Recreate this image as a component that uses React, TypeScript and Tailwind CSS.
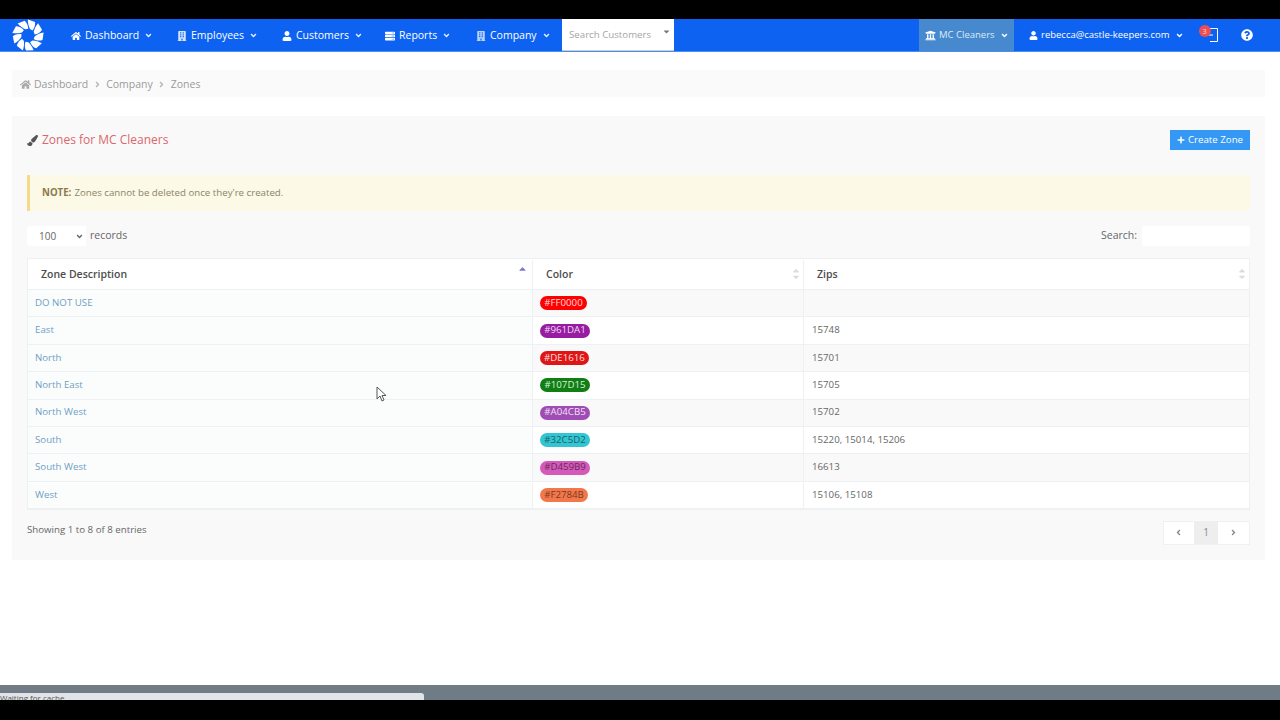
import React from "react";
import { FaHome, FaBuilding, FaUser, FaServer, FaUniversity, FaQuestionCircle, FaPaintBrush, FaPlus, FaAngleDown, FaAngleRight, FaAngleLeft, FaCaretDown, FaSortUp, FaSortDown } from "react-icons/fa";

const navLeft = [
  { icon: FaHome, label: "Dashboard", cls: "w-[106px] pl-[12px]", iconCls: "mr-[4px] shrink-0" },
  { icon: FaBuilding, label: "Employees", cls: "w-[105px] pl-[12px]", iconCls: "mr-[4px] shrink-0 text-[#d5e4fb]" },
  { icon: FaUser, label: "Customers", cls: "w-[103px] pl-[12px]", iconCls: "mr-[4px] shrink-0" },
  { icon: FaServer, label: "Reports", cls: "w-[91px] pl-[12px]", iconCls: "mr-[4px] shrink-0" },
  { icon: FaBuilding, label: "Company", cls: "w-[98px] pl-[12px]", iconCls: "mr-[4px] shrink-0 text-[#b9d3fa]" },
];

const rows = [
  { zone: "DO NOT USE", color: "#FF0000", text: "#ffd8d8", w: "w-[47px]", zips: "" },
  { zone: "East", color: "#961DA1", text: "#f0d8f2", w: "w-[50px]", zips: "15748" },
  { zone: "North", color: "#DE1616", text: "#ffdede", w: "w-[49px]", zips: "15701" },
  { zone: "North East", color: "#107D15", text: "#d8f0d8", w: "w-[50px]", zips: "15705" },
  { zone: "North West", color: "#A04CB5", text: "#f0e0f4", w: "w-[50px]", zips: "15702" },
  { zone: "South", color: "#32C5D2", text: "#1d5f67", w: "w-[50px]", zips: "15220, 15014, 15206" },
  { zone: "South West", color: "#D459B9", text: "#6a2a5f", w: "w-[50px]", zips: "16613" },
  { zone: "West", color: "#F2784B", text: "#7b3a20", w: "w-[48px]", zips: "15106, 15108" },
];

function Logo() {
  const blades = [0, 40, 80, 120, 160, 200, 240, 280, 320];
  return (
    <svg width="34" height="33" viewBox="0 0 34 33" className="shrink-0">
      {blades.map((a) => (
        <path key={a} d="M19 10 C17.500 7 16.800 4 16.800 0.600 L24 3 C24.500 6 23.500 9 21.500 11.500 Z" fill="#ffffff" transform={`rotate(${a} 17 16.5)`} />
      ))}
    </svg>
  );
}

function Sort({ active }: { active?: boolean }) {
  if (active) {
    return (
      <span className="flex flex-col items-center text-[#7b78c9]">
        <FaSortUp size={11} className="mt-[-6px]" />
      </span>
    );
  }
  return (
    <span className="relative h-[14px] w-[8px] text-[#d8dcdf]">
      <FaSortUp size={10} className="absolute left-[-1px] top-0" />
      <FaSortDown size={10} className="absolute left-[-1px] top-[2px]" />
    </span>
  );
}

export default function App() {
  return (
    <div className="relative flex h-[720px] w-[1280px] flex-col overflow-hidden bg-white text-[10.5px] text-[#666666] font-['Open_Sans',sans-serif]">
      <div className="h-[19px] shrink-0 bg-black" />
      <header className="flex h-[33px] shrink-0 items-stretch border-b border-[#4a8ff0] bg-[#0d62f2] text-white">
        <div className="flex w-[59px] items-center pl-[11px]">
          <Logo />
        </div>
        {navLeft.map((n) => {
          const I = n.icon;
          return (
            <div key={n.label} className={`flex items-center pt-[1px] text-[10.5px] ${n.cls}`}>
              <I size={10} className={n.iconCls} />
              <span className="whitespace-nowrap">{n.label}</span>
              <FaAngleDown size={9} className="ml-[5px] shrink-0 opacity-90" />
            </div>
          );
        })}
        <div className="flex w-[112px] items-start border-b border-[#cccccc] bg-white pl-[7px] text-[9.7px] text-[#a5a5a5]">
          <span className="mt-[9px] whitespace-nowrap">Search Customers</span>
          <FaCaretDown size={9} className="ml-[11px] mt-[8px] text-[#777777]" />
        </div>
        <div className="ml-[245px] flex w-[95px] items-center bg-[#4689ce] pl-[6px] text-[9.5px] text-[#dfeaf6]">
          <FaUniversity size={11} className="mr-[3px] shrink-0 text-white" />
          <span className="whitespace-nowrap">MC Cleaners</span>
          <FaAngleDown size={9} className="ml-[5px] shrink-0 text-white" />
        </div>
        <div className="ml-[15px] flex items-center text-[9.5px]">
          <FaUser size={9} className="mr-[3px] shrink-0" />
          <span className="whitespace-nowrap">rebecca@castle-keepers.com</span>
          <FaAngleDown size={9} className="ml-[5px] shrink-0" />
        </div>
        <div className="relative ml-[24px] flex w-[12px] items-center">
          <svg width="10" height="14" viewBox="0 0 10 14" fill="none" stroke="#fff" strokeWidth="1">
            <path d="M2 .5H9.500V13.500H2M.5 7H5" />
          </svg>
          <span className="absolute left-[-9px] top-[6px] flex h-[12px] w-[12px] items-center justify-center rounded-full bg-[#ef4d56] text-[8px] text-[#ffd5d5]">3</span>
        </div>
        <div className="ml-[21px] flex items-center">
          <FaQuestionCircle size={12} />
        </div>
      </header>

      <main className="flex-1 px-[12px] pr-[15px]">
        <nav className="mt-[18px] flex h-[27px] items-center bg-[#fafafa] pl-[8px] pt-[2px] text-[10.5px] text-[#9b9b9b]">
          <FaHome size={11} className="mr-[3px] text-[#aaaaaa]" />
          <span>Dashboard</span>
          <FaAngleRight size={9} className="mx-[4.500px] text-[#b5b5b5]" />
          <span>Company</span>
          <FaAngleRight size={9} className="mx-[4.500px] text-[#b5b5b5]" />
          <span>Zones</span>
        </nav>

        <section className="mt-[19px] h-[444px] bg-[#f9f9fa] px-[15px]">
          <div className="flex h-[48px] items-center justify-between">
            <div className="flex items-center text-[12px] text-[#d9686a]">
              <FaPaintBrush size={11} className="mr-[4px] text-[#555555]" />
              <span>Zones for MC Cleaners</span>
            </div>
            <button className="flex h-[20px] w-[80px] items-center justify-center bg-[#3598f5] text-[9.7px] text-white">
              <FaPlus size={8} className="mr-[3px]" />
              Create Zone
            </button>
          </div>

          <div className="mt-[11px] flex h-[36px] items-center border-l-[3px] border-[#f8d98c] bg-[#fcf9e6] pl-[12px] pt-[1px] text-[9.7px] text-[#8a8568]">
            <strong className="mr-[3px] font-bold text-[#8a7a4a]">NOTE:</strong>
            <span>Zones cannot be deleted once they're created.</span>
          </div>

          <div className="mt-[15px] flex h-[20px] items-center justify-between">
            <div className="flex items-center">
              <div className="flex h-[20px] w-[59px] items-center justify-between rounded-[2px] bg-white pl-[12px] pr-[2px] text-[10px]">
                <span>100</span>
                <FaAngleDown size={9} />
              </div>
              <span className="ml-[4px]">records</span>
            </div>
            <div className="flex items-center">
              <span className="mr-[5px]">Search:</span>
              <div className="h-[20px] w-[108px] rounded-[2px] bg-white" />
            </div>
          </div>

          <div className="mt-[12px] border-x border-t border-b-2 border-[#eef1f3] text-[9.7px]">
            <div className="grid h-[31px] grid-cols-[505px_271px_1fr] border-b border-[#eef1f3] bg-white pt-[1px] text-[10.5px] font-semibold text-[#4d4d4d]">
              <div className="flex items-center justify-between border-r border-[#eef1f3] pl-[13px] pr-[4px]">
                <span>Zone Description</span>
                <Sort active />
              </div>
              <div className="flex items-center justify-between border-r border-[#eef1f3] pl-[13px] pr-[3px]">
                <span>Color</span>
                <Sort />
              </div>
              <div className="flex items-center justify-between pl-[13px] pr-[3px]">
                <span>Zips</span>
                <Sort />
              </div>
            </div>
            {rows.map((r, i) => (
              <div
                key={r.zone}
                className={`grid h-[27.4px] grid-cols-[505px_271px_1fr] border-b border-[#eef1f3] last:h-[26px] last:border-b-0 last:pt-[1px] ${i % 2 === 0 ? "bg-[#f9f9f9]" : "bg-white"}`}
              >
                <div className="flex items-center border-r border-[#eef1f3] bg-[#fbfdfd] pl-[7px] text-[#6f9ec4]">{r.zone}</div>
                <div className="flex items-center border-r border-[#eef1f3] pl-[7px]">
                  <span
                    className={`flex h-[14px] items-center justify-center rounded-full text-[9.7px] ${r.w}`}
                    style={{ backgroundColor: r.color, color: r.text }}
                  >
                    {r.color}
                  </span>
                </div>
                <div className="flex items-center pl-[8px]">{r.zips}</div>
              </div>
            ))}
          </div>

          <div className="mt-[9px] flex items-start justify-between">
            <span className="mt-[4px] text-[9.7px] text-[#666666]">Showing 1 to 8 of 8 entries</span>
            <div className="mt-[2px] flex h-[24px] w-[87px] items-stretch border border-[#f0f0f0] text-[10px] text-[#888888]">
              <span className="flex w-[30px] items-center justify-center bg-white"><FaAngleLeft size={9} /></span>
              <span className="flex w-[25px] items-center justify-center bg-[#eeeeee]">1</span>
              <span className="flex w-[31px] items-center justify-center bg-white"><FaAngleRight size={9} /></span>
            </div>
          </div>
        </section>
      </main>

      <footer className="relative h-[15px] shrink-0 bg-[#6f7c86]">
        <div className="absolute bottom-0 left-0 h-[7px] w-[424px] overflow-hidden rounded-tr-[3px] bg-[#e0e4e8] text-[8px] leading-[10px] text-[#555555]">Waiting for cache...</div>
      </footer>
      <div className="h-[20px] shrink-0 bg-black" />

      <svg width="12" height="16" viewBox="0 0 12 16" className="absolute left-[376px] top-[386px]">
        <path d="M1 1V13L4 10L6 15L8 14L6 9.500H10Z" fill="#fff" stroke="#555" strokeWidth="1" />
      </svg>
    </div>
  );
}
